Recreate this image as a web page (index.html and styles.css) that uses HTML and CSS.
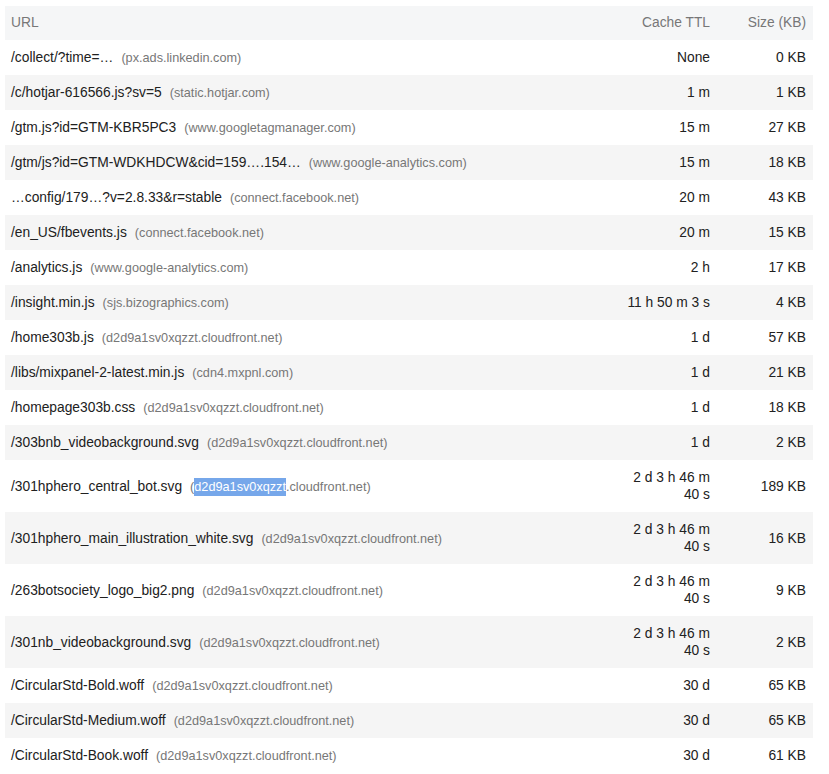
FILE: index.html
```html
<!DOCTYPE html>
<html>
<head>
<meta charset="utf-8">
<link rel="stylesheet" href="styles.css">
</head>
<body>
<table class="tbl">
  <thead>
    <tr><th class="c-url">URL</th><th class="c-ttl">Cache TTL</th><th class="c-size">Size (KB)</th></tr>
  </thead>
  <tbody>
    <tr><td class="c-url">/collect/?time=…<span class="host">(px.ads.linkedin.com)</span></td><td class="c-ttl">None</td><td class="c-size">0 KB</td></tr>
    <tr><td class="c-url">/c/hotjar-616566.js?sv=5<span class="host">(static.hotjar.com)</span></td><td class="c-ttl">1 m</td><td class="c-size">1 KB</td></tr>
    <tr><td class="c-url">/gtm.js?id=GTM-KBR5PC3<span class="host">(www.googletagmanager.com)</span></td><td class="c-ttl">15 m</td><td class="c-size">27 KB</td></tr>
    <tr><td class="c-url">/gtm/js?id=GTM-WDKHDCW&amp;cid=159….154…<span class="host">(www.google-analytics.com)</span></td><td class="c-ttl">15 m</td><td class="c-size">18 KB</td></tr>
    <tr><td class="c-url">…config/179…?v=2.8.33&amp;r=stable<span class="host">(connect.facebook.net)</span></td><td class="c-ttl">20 m</td><td class="c-size">43 KB</td></tr>
    <tr><td class="c-url">/en_US/fbevents.js<span class="host">(connect.facebook.net)</span></td><td class="c-ttl">20 m</td><td class="c-size">15 KB</td></tr>
    <tr><td class="c-url">/analytics.js<span class="host">(www.google-analytics.com)</span></td><td class="c-ttl">2 h</td><td class="c-size">17 KB</td></tr>
    <tr><td class="c-url">/insight.min.js<span class="host">(sjs.bizographics.com)</span></td><td class="c-ttl">11 h 50 m 3 s</td><td class="c-size">4 KB</td></tr>
    <tr><td class="c-url">/home303b.js<span class="host">(d2d9a1sv0xqzzt.cloudfront.net)</span></td><td class="c-ttl">1 d</td><td class="c-size">57 KB</td></tr>
    <tr><td class="c-url">/libs/mixpanel-2-latest.min.js<span class="host">(cdn4.mxpnl.com)</span></td><td class="c-ttl">1 d</td><td class="c-size">21 KB</td></tr>
    <tr><td class="c-url">/homepage303b.css<span class="host">(d2d9a1sv0xqzzt.cloudfront.net)</span></td><td class="c-ttl">1 d</td><td class="c-size">18 KB</td></tr>
    <tr><td class="c-url">/303bnb_videobackground.svg<span class="host">(d2d9a1sv0xqzzt.cloudfront.net)</span></td><td class="c-ttl">1 d</td><td class="c-size">2 KB</td></tr>
    <tr><td class="c-url">/301hphero_central_bot.svg<span class="host">(<span class="sel">d2d9a1sv0xqzzt</span>.cloudfront.net)</span></td><td class="c-ttl">2 d 3 h 46 m 40 s</td><td class="c-size">189 KB</td></tr>
    <tr><td class="c-url">/301hphero_main_illustration_white.svg<span class="host">(d2d9a1sv0xqzzt.cloudfront.net)</span></td><td class="c-ttl">2 d 3 h 46 m 40 s</td><td class="c-size">16 KB</td></tr>
    <tr><td class="c-url">/263botsociety_logo_big2.png<span class="host">(d2d9a1sv0xqzzt.cloudfront.net)</span></td><td class="c-ttl">2 d 3 h 46 m 40 s</td><td class="c-size">9 KB</td></tr>
    <tr><td class="c-url">/301nb_videobackground.svg<span class="host">(d2d9a1sv0xqzzt.cloudfront.net)</span></td><td class="c-ttl">2 d 3 h 46 m 40 s</td><td class="c-size">2 KB</td></tr>
    <tr><td class="c-url">/CircularStd-Bold.woff<span class="host">(d2d9a1sv0xqzzt.cloudfront.net)</span></td><td class="c-ttl">30 d</td><td class="c-size">65 KB</td></tr>
    <tr><td class="c-url">/CircularStd-Medium.woff<span class="host">(d2d9a1sv0xqzzt.cloudfront.net)</span></td><td class="c-ttl">30 d</td><td class="c-size">65 KB</td></tr>
    <tr><td class="c-url">/CircularStd-Book.woff<span class="host">(d2d9a1sv0xqzzt.cloudfront.net)</span></td><td class="c-ttl">30 d</td><td class="c-size">61 KB</td></tr>
  </tbody>
</table>
</body>
</html>
```
FILE: styles.css
```css
html, body {
  margin: 0;
  padding: 0;
  background: #ffffff;
}
body {
  padding: 6px 0 0 5px;
  font-family: "Liberation Sans", Arial, sans-serif;
  font-size: 13.8px;
  color: #212121;
}
.tbl {
  width: 808px;
  border-collapse: collapse;
  table-layout: fixed;
}
.tbl th {
  background: #f5f6f7;
  color: #777777;
  font-weight: normal;
  height: 34px;
  padding: 0 7px 0 6px;
  line-height: 16px;
  box-sizing: border-box;
}
.tbl td {
  padding: 9px 7px 9px 6px;
  line-height: 17px;
  vertical-align: middle;
}
.tbl tbody tr:nth-child(even) td {
  background: #f5f5f5;
}
.c-url {
  text-align: left;
  white-space: nowrap;
}
.c-ttl {
  width: 110px;
  text-align: right;
}
td.c-ttl {
  padding-left: 16px;
}
.c-size {
  width: 96px;
  text-align: right;
}
.host {
  margin-left: 8px;
  font-size: 12.7px;
  line-height: 12px;
  color: #777777;
}
.sel {
  background: #76a7ea;
  color: #ffffff;
  padding: 2px 0;
}
```
